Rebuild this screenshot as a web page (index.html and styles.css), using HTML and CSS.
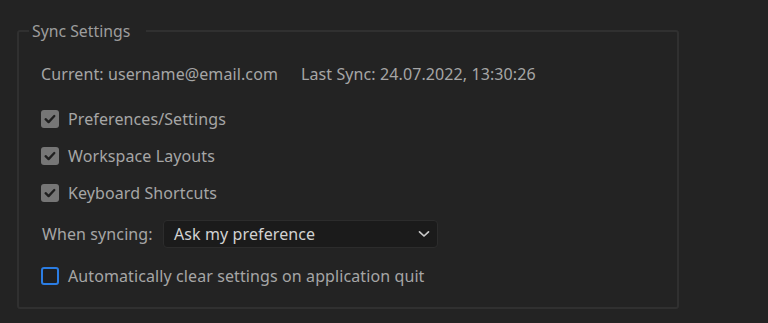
FILE: index.html
```html
<!DOCTYPE html>
<html>
<head>
<meta charset="utf-8">
<link rel="stylesheet" href="styles.css">
</head>
<body>
<fieldset class="sync">
  <legend class="sync-title">Sync Settings</legend>
  <div class="account">
    <span>Current: username@email.com</span>
    <span>Last Sync: 24.07.2022, 13:30:26</span>
  </div>
  <div class="checks">
    <label class="check">
      <span class="box checked"><svg viewBox="0 0 18 18" width="18" height="18"><path d="M4.6 9.2 L7.6 12.1 L13.3 6" fill="none" stroke="#1f1f1f" stroke-width="2.3" stroke-linecap="round" stroke-linejoin="round"/></svg></span>
      <span>Preferences/Settings</span>
    </label>
    <label class="check">
      <span class="box checked"><svg viewBox="0 0 18 18" width="18" height="18"><path d="M4.6 9.2 L7.6 12.1 L13.3 6" fill="none" stroke="#1f1f1f" stroke-width="2.3" stroke-linecap="round" stroke-linejoin="round"/></svg></span>
      <span>Workspace Layouts</span>
    </label>
    <label class="check">
      <span class="box checked"><svg viewBox="0 0 18 18" width="18" height="18"><path d="M4.6 9.2 L7.6 12.1 L13.3 6" fill="none" stroke="#1f1f1f" stroke-width="2.3" stroke-linecap="round" stroke-linejoin="round"/></svg></span>
      <span>Keyboard Shortcuts</span>
    </label>
  </div>
  <div class="syncing">
    <span class="syncing-label">When syncing:</span>
    <div class="select">
      <span>Ask my preference</span>
      <svg viewBox="0 0 12 8" width="12" height="8"><path d="M1.5 1.8 L6 6 L10.5 1.8" fill="none" stroke="#c9c9c9" stroke-width="1.7" stroke-linecap="round" stroke-linejoin="round"/></svg>
    </div>
  </div>
  <label class="check clear">
    <span class="box focus"></span>
    <span>Automatically clear settings on application quit</span>
  </label>
</fieldset>
</body>
</html>
```
FILE: styles.css
```css
html, body {
  margin: 0;
  padding: 0;
  background: #232323;
}
body {
  font-family: "Noto Sans", "Open Sans", sans-serif;
  font-size: 16px;
  letter-spacing: 0.1px;
  color: #a6a6a6;
  padding: 21px 0 0 17px;
  height: 323px;
  box-sizing: border-box;
  overflow: hidden;
}
.sync {
  width: 662px;
  height: 288px;
  box-sizing: border-box;
  margin: 0;
  border: 2px solid #303030;
  border-radius: 3px;
  padding: 0 0 0 22px;
  background: #232323;
}
.sync-title {
  margin-left: -12px;
  padding: 0 16px 0 3px;
  line-height: 20px;
  font-size: 15.8px;
  letter-spacing: 0;
  color: #9d9d9d;
}
.account {
  display: flex;
  gap: 23px;
  margin-top: 23px;
  line-height: 20px;
}
.checks {
  display: flex;
  flex-direction: column;
  gap: 13px;
  margin-top: 23px;
}
.check {
  display: flex;
  align-items: center;
  gap: 9px;
  height: 24px;
  line-height: 20px;
}
.box {
  width: 18px;
  height: 18px;
  border-radius: 3px;
  box-sizing: border-box;
  display: flex;
  flex-shrink: 0;
}
.box.checked {
  background: #767676;
}
.box.focus {
  border: 2px solid #2b7de3;
  background: #1f1f1f;
}
.syncing {
  display: flex;
  align-items: center;
  margin-top: 15px;
  height: 28px;
}
.syncing-label {
  margin-left: 1px;
  width: 121px;
}
.select {
  width: 275px;
  height: 28px;
  box-sizing: border-box;
  border: 1px solid #2c2c2c;
  border-radius: 4px;
  background: #1b1b1b;
  display: flex;
  align-items: center;
  justify-content: space-between;
  padding: 0 7px 0 10px;
  color: #d2d2d2;
  font-size: 16px;
}
.clear {
  margin-top: 16px;
}
```
